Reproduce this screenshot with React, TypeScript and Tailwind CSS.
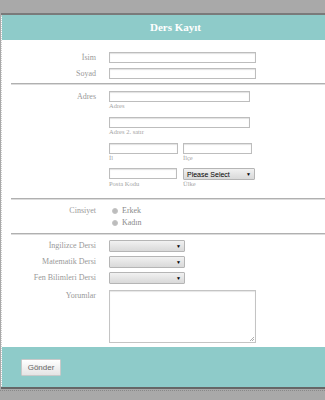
const serif = { fontFamily: '"Liberation Serif", "Times New Roman", serif' };
const sans = { fontFamily: '"Liberation Sans", Arial, sans-serif' };

function TextInput({ className = '' }: { className?: string }) {
  return (
    <div
      className={`h-[11px] border border-[#bdbdbd] bg-white shadow-[inset_0_1px_1px_rgba(0,0,0,0.12)] ${className}`}
    />
  );
}

function Select({ width, text }: { width: string; text?: string }) {
  return (
    <div
      className={`${width} flex h-[12px] items-center justify-between rounded-[1px] border border-[#b5b5b5] bg-gradient-to-b from-[#f1f1f1] to-[#d9d9d9] pl-[3px] pr-[3px]`}
      style={sans}
    >
      <span className="text-[7px] leading-none text-black">{text}</span>
      <span className="text-[5px] leading-none text-black">▼</span>
    </div>
  );
}

function Label({ children }: { children: React.ReactNode }) {
  return (
    <div className="w-[94px] shrink-0 text-right text-[8px] leading-none text-[#999999]" style={serif}>
      {children}
    </div>
  );
}

function Sub({ children, className = '' }: { children: React.ReactNode; className?: string }) {
  return (
    <div className={`h-[8px] text-[6.5px] leading-[8px] text-[#a5a5a5] ${className}`} style={serif}>
      {children}
    </div>
  );
}

function Divider() {
  return <div className="ml-[9px] h-[2px] border-t border-[#b0b0b0] bg-[#dcdcdc]" />;
}

function Radio({ label }: { label: string }) {
  return (
    <div className="flex h-[12px] items-center">
      <span className="ml-[3px] h-[6px] w-[6px] rounded-full border border-[#c4c4c4] bg-[#bcbcbc]" />
      <span className="ml-[4px] text-[8px] leading-none text-[#8a8a8a]" style={serif}>
        {label}
      </span>
    </div>
  );
}

export default function App() {
  return (
    <div className="min-h-[400px] w-[325px] overflow-hidden bg-[#a9a9a9] pt-[13px]">
      <div className="ml-[1px] w-[348px]">
        <div className="h-[2px] bg-[#7a7a7a]" />
        <div className="border-l border-dotted border-[#cfcfcf] bg-white">
          <div className="flex h-[25px] items-center justify-center bg-[#8ecbc9]">
            <span className="text-[11px] font-bold text-white" style={serif}>
              Ders Kayıt
            </span>
          </div>

          <div className="pb-[4px] pt-[12px]">
            <div className="flex h-[11px] items-center">
              <Label>İsim</Label>
              <TextInput className="ml-[13px] w-[147px]" />
            </div>
            <div className="mt-[5px] flex h-[11px] items-center">
              <Label>Soyad</Label>
              <TextInput className="ml-[13px] w-[147px]" />
            </div>

            <div className="mt-[4px]">
              <Divider />
            </div>

            <div className="mt-[6px] flex">
              <div className="flex h-[11px] items-center">
                <Label>Adres</Label>
              </div>
              <div className="ml-[13px]">
                <TextInput className="w-[141px]" />
                <Sub>Adres</Sub>
                <TextInput className="mt-[7px] w-[141px]" />
                <Sub>Adres 2. satır</Sub>
                <div className="mt-[7px] flex gap-[5px]">
                  <div>
                    <TextInput className="w-[69px]" />
                    <Sub>İl</Sub>
                  </div>
                  <div>
                    <TextInput className="w-[69px]" />
                    <Sub>İlçe</Sub>
                  </div>
                </div>
                <div className="mt-[6px] flex gap-[6px]">
                  <div>
                    <TextInput className="w-[68px]" />
                    <Sub className="mt-[1px]">Posta Kodu</Sub>
                  </div>
                  <div>
                    <Select width="w-[72px]" text="Please Select" />
                    <Sub>Ülke</Sub>
                  </div>
                </div>
              </div>
            </div>

            <div className="mt-[10px]">
              <Divider />
            </div>

            <div className="mt-[5px] flex">
              <div className="flex h-[12px] items-center">
                <Label>Cinsiyet</Label>
              </div>
              <div className="ml-[13px]">
                <Radio label="Erkek" />
                <Radio label="Kadın" />
              </div>
            </div>

            <div className="mt-[4px]">
              <Divider />
            </div>

            <div className="mt-[5px] flex h-[12px] items-center">
              <Label>İngilizce Dersi</Label>
              <div className="ml-[13px]">
                <Select width="w-[76px]" />
              </div>
            </div>
            <div className="mt-[4px] flex h-[12px] items-center">
              <Label>Matematik Dersi</Label>
              <div className="ml-[13px]">
                <Select width="w-[76px]" />
              </div>
            </div>
            <div className="mt-[4px] flex h-[12px] items-center">
              <Label>Fen Bilimleri Dersi</Label>
              <div className="ml-[13px]">
                <Select width="w-[76px]" />
              </div>
            </div>

            <div className="mt-[6px] flex">
              <div className="pt-[2px]">
                <Label>Yorumlar</Label>
              </div>
              <div className="relative ml-[13px] h-[53px] w-[147px] border border-[#c4c4c4] bg-white shadow-[inset_0_1px_1px_rgba(0,0,0,0.1)]">
                <svg className="absolute bottom-[1px] right-[1px]" width="5" height="5" viewBox="0 0 5 5">
                  <path d="M1 5 L5 1 M3 5 L5 3" stroke="#999" strokeWidth="0.8" />
                </svg>
              </div>
            </div>
          </div>

          <div className="h-[40px] bg-[#8ecbc9] pl-[19px] pt-[12px]">
            <button
              className="flex h-[17px] w-[40px] items-center justify-center rounded-[1px] border border-[#c9c9c9] bg-gradient-to-b from-white to-[#e4e4e4] text-[8px] text-[#666]"
              style={sans}
            >
              Gönder
            </button>
          </div>
        </div>
        <div className="h-[2px] bg-[#666]" />
      </div>
      <div className="h-[2px] border-b border-dotted border-[#888]" />
    </div>
  );
}
